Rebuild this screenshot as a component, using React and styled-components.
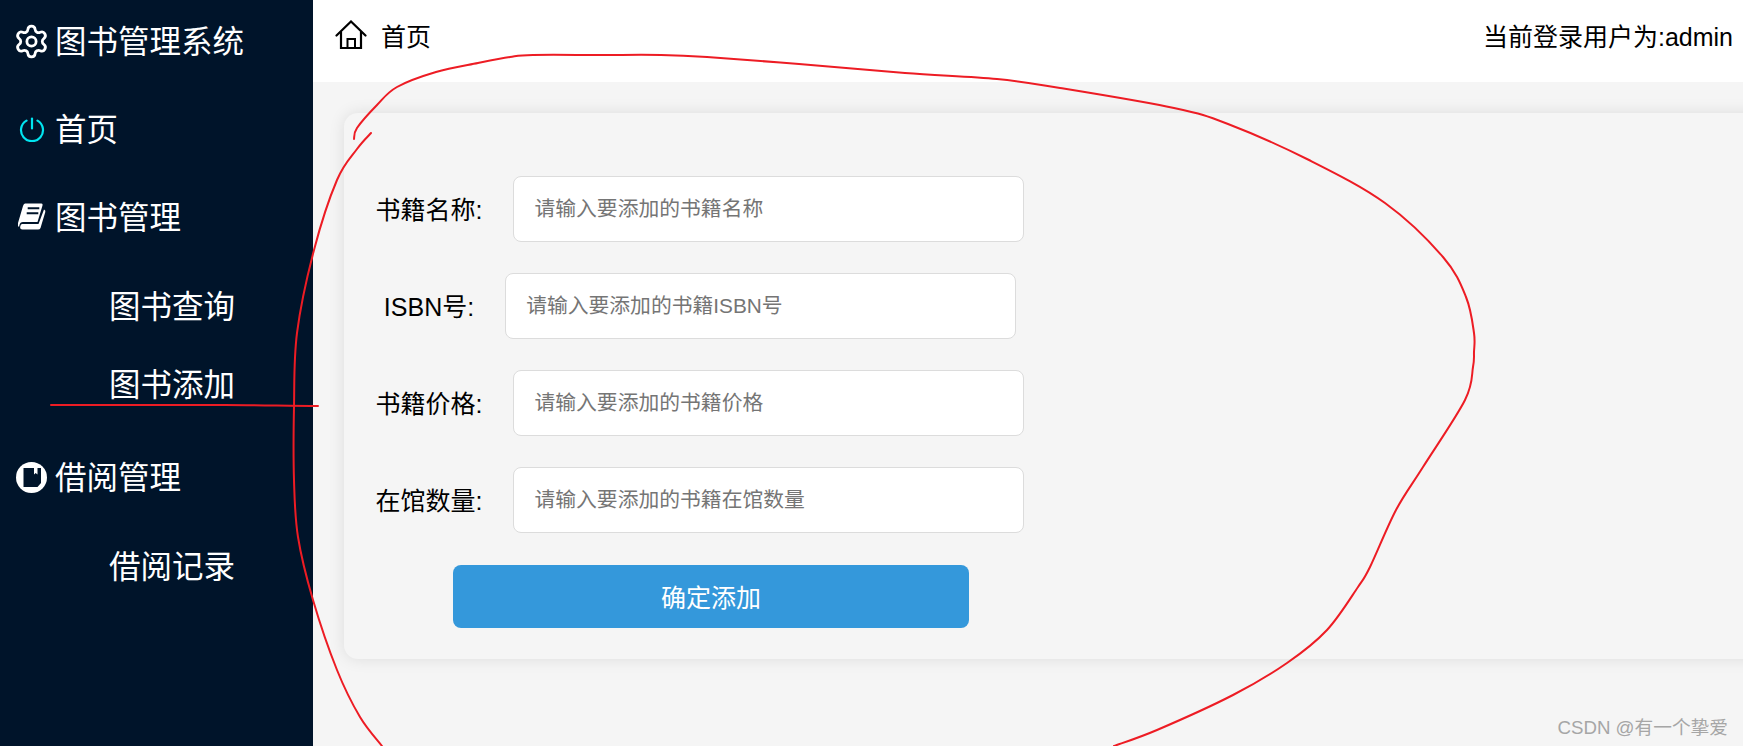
import React from "react";
import styled, { createGlobalStyle } from "styled-components";
import { Settings } from "lucide-react";

const Global = createGlobalStyle`
  html, body { margin: 0; padding: 0; height: 100%; overflow: hidden; }
  body { font-family: "Liberation Sans", "Noto Sans CJK SC", sans-serif; background: #f5f5f5; }
  * { box-sizing: border-box; }
`;

const Page = styled.div`
  position: relative;
  display: flex;
  width: 1743px;
  height: 746px;
  overflow: hidden;
`;

const Sidebar = styled.aside`
  flex: 0 0 313px;
  background: #00142a;
  color: #fff;
`;

const Brand = styled.div`
  display: flex;
  align-items: center;
  gap: 8px;
  height: 82px;
  padding-left: 16px;
  font-size: 31.5px;
  margin-bottom: 3px;
`;

const MenuItem = styled.div`
  display: flex;
  align-items: center;
  gap: 8px;
  height: 88px;
  padding-left: 16px;
  font-size: 31.5px;
`;

const MenuText = styled.span`
  margin-bottom: 5px;
`;

const IconSlot = styled.span`
  display: flex;
  justify-content: center;
  align-items: center;
  width: 31px;
  height: 31px;
  flex: none;
  svg { flex: none; }
`;

const SubMenu = styled.div`
  padding: 6px 0 10px;
`;

const SubItem = styled.div`
  display: flex;
  align-items: center;
  height: 78px;
  padding: 0 0 5px 109px;
  font-size: 31.5px;
`;

const Main = styled.main`
  flex: 1;
  min-width: 0;
  overflow: hidden;
`;

const Header = styled.header`
  display: flex;
  align-items: center;
  justify-content: space-between;
  height: 82px;
  padding: 0 10px 12px 22px;
  background: #fff;
  color: #000;
  font-size: 25px;
`;

const Crumb = styled.div`
  display: flex;
  align-items: center;
  gap: 14px;
`;

const Content = styled.div`
  padding: 31px 0 0 31px;
`;

const Card = styled.section`
  width: 1500px;
  padding: 63px 0 31px 31px;
  border-radius: 14px;
  background: #f5f5f5;
  box-shadow: 0 0 16px rgba(0, 0, 0, 0.1);
`;

const Form = styled.form`
  display: flex;
  flex-direction: column;
  gap: 31px;
  width: 650px;
`;

const Row = styled.div`
  display: flex;
  align-items: center;
  justify-content: center;
  gap: 31px;
`;

const Label = styled.label`
  margin-bottom: 2px;
  font-size: 25px;
  color: #000;
  white-space: nowrap;
`;

const Input = styled.input`
  flex: none;
  width: 511px;
  height: 66px;
  padding: 0 20px;
  border: 1px solid #dcdcdc;
  border-radius: 8px;
  background: #fff;
  font: 20.8px "Liberation Sans", "Noto Sans CJK SC", sans-serif;
  outline: none;
  &::placeholder { color: #757575; opacity: 1; }
`;

const Submit = styled.button`
  width: 516px;
  height: 63px;
  margin: 1px 0 0 78px;
  padding: 0 0 2px;
  border: 0;
  border-radius: 8px;
  background: #3498db;
  color: #fff;
  font: 25px "Liberation Sans", "Noto Sans CJK SC", sans-serif;
`;

const Watermark = styled.div`
  position: absolute;
  right: 15px;
  bottom: 6px;
  font-size: 18.7px;
  line-height: 24px;
  color: #a6a6a6;
  white-space: nowrap;
`;

const Scribble = styled.svg`
  position: absolute;
  left: 0;
  top: 0;
  width: 1743px;
  height: 746px;
  pointer-events: none;
  path {
    fill: none;
    stroke: #ed1c24;
    stroke-width: 2;
    stroke-linecap: round;
    stroke-linejoin: round;
  }
`;

const smooth = (pts) => {
  let d = `M${pts[0][0]} ${pts[0][1]}`;
  for (let i = 0; i < pts.length - 1; i++) {
    const p0 = pts[i - 1] || pts[i];
    const p1 = pts[i];
    const p2 = pts[i + 1];
    const p3 = pts[i + 2] || p2;
    const c1x = p1[0] + (p2[0] - p0[0]) / 6;
    const c1y = p1[1] + (p2[1] - p0[1]) / 6;
    const c2x = p2[0] - (p3[0] - p1[0]) / 6;
    const c2y = p2[1] - (p3[1] - p1[1]) / 6;
    d += `C${c1x} ${c1y} ${c2x} ${c2y} ${p2[0]} ${p2[1]}`;
  }
  return d;
};

const outerLoop = [
  [354, 139], [357, 128], [377, 105], [397, 87], [436, 72], [478, 63], [510, 57], [533, 55],
  [600, 55], [661, 55], [707, 57], [799, 64], [905, 73], [997, 79], [1060, 88], [1174, 108], [1228, 124],
  [1309, 160], [1385, 203], [1443, 257], [1466, 297], [1474, 333], [1474, 352], [1473, 367], [1465, 400], [1423, 467],
  [1396, 510], [1370, 567], [1358, 587], [1327, 630], [1287, 663], [1233, 695], [1157, 730], [1114, 746],
];

const innerLoop = [
  [371, 133], [357, 149], [337, 180], [314, 250], [297, 333], [294, 407], [294, 480], [298, 537],
  [313, 600], [337, 670], [360, 717], [382, 746],
];

const GearIcon = () => <Settings size={37} strokeWidth={1.8} color="#fff" />;

const PowerIcon = () => (
  <svg width="26" height="25" viewBox="0 0 26 25" fill="none" stroke="#00e5f0" strokeWidth="2.2" strokeLinecap="round">
    <path d="M7.5 3.6A11 11 0 1 0 18.5 3.6" />
    <path d="M13 1.5V11.5" />
  </svg>
);

const BookIcon = () => (
  <svg width="30" height="30" viewBox="1 0 30 30">
    <path fill="#fff" d="M9 1.5H25.5Q27 1.5 26.5 3.5L21.5 20H7Q4 20 3.5 23L3 25Q1.5 24 2 21L7 4Q7.7 1.5 9 1.5Z" />
    <path fill="#fff" d="M6 22H22.5L28 7.5Q29.8 8.2 29.3 10L24.5 26Q24 27.5 22 27.5H6.5Q3.8 27.5 4.2 24.8Q4.5 22 6 22Z" />
    <path stroke="#00142a" strokeWidth="2" d="M11.7 6.3H23.3M10.7 11.3H22.3" />
  </svg>
);

const BookmarkIcon = () => (
  <svg width="31" height="31" viewBox="0 0 31 31">
    <circle cx="15.5" cy="15.5" r="15.5" fill="#fff" />
    <path fill="#00142a" d="M7.5 6H25V21L21.5 25H7.5Z" />
    <path fill="#fff" d="M18 6H21.5V12.5L19.7 11L18 12.5Z" />
  </svg>
);

const HomeIcon = () => (
  <svg width="32" height="30" viewBox="0 0 32 30" fill="none" stroke="#000" strokeWidth="2.2" strokeLinejoin="miter" strokeLinecap="round">
    <path d="M1.5 15.5L16 1.5L30.5 15.5" />
    <path d="M6 12V28H26V12" />
    <path d="M12.5 28V19H20V28" strokeWidth="2" />
  </svg>
);

const fields = [
  { label: "书籍名称:", placeholder: "请输入要添加的书籍名称" },
  { label: "ISBN号:", placeholder: "请输入要添加的书籍ISBN号" },
  { label: "书籍价格:", placeholder: "请输入要添加的书籍价格" },
  { label: "在馆数量:", placeholder: "请输入要添加的书籍在馆数量" },
];

export default function App() {
  return (
    <Page>
      <Global />
      <Sidebar>
        <Brand>
          <IconSlot><GearIcon /></IconSlot>
          <MenuText>图书管理系统</MenuText>
        </Brand>
        <MenuItem>
          <IconSlot><PowerIcon /></IconSlot>
          <MenuText>首页</MenuText>
        </MenuItem>
        <MenuItem>
          <IconSlot><BookIcon /></IconSlot>
          <MenuText>图书管理</MenuText>
        </MenuItem>
        <SubMenu>
          <SubItem>图书查询</SubItem>
          <SubItem>图书添加</SubItem>
        </SubMenu>
        <MenuItem>
          <IconSlot><BookmarkIcon /></IconSlot>
          <MenuText>借阅管理</MenuText>
        </MenuItem>
        <SubMenu>
          <SubItem>借阅记录</SubItem>
        </SubMenu>
      </Sidebar>
      <Main>
        <Header>
          <Crumb>
            <HomeIcon />
            首页
          </Crumb>
          <div>当前登录用户为:admin</div>
        </Header>
        <Content>
          <Card>
            <Form>
              {fields.map((f) => (
                <Row key={f.label}>
                  <Label>{f.label}</Label>
                  <Input placeholder={f.placeholder} />
                </Row>
              ))}
              <Submit type="button">确定添加</Submit>
            </Form>
          </Card>
        </Content>
      </Main>
      <Watermark>CSDN @有一个挚爱</Watermark>
      <Scribble viewBox="0 0 1743 746">
        <path d={smooth(outerLoop)} />
        <path d={smooth(innerLoop)} />
        <path d="M51 405L225 405C260 405 290 406 318 406" />
      </Scribble>
    </Page>
  );
}
